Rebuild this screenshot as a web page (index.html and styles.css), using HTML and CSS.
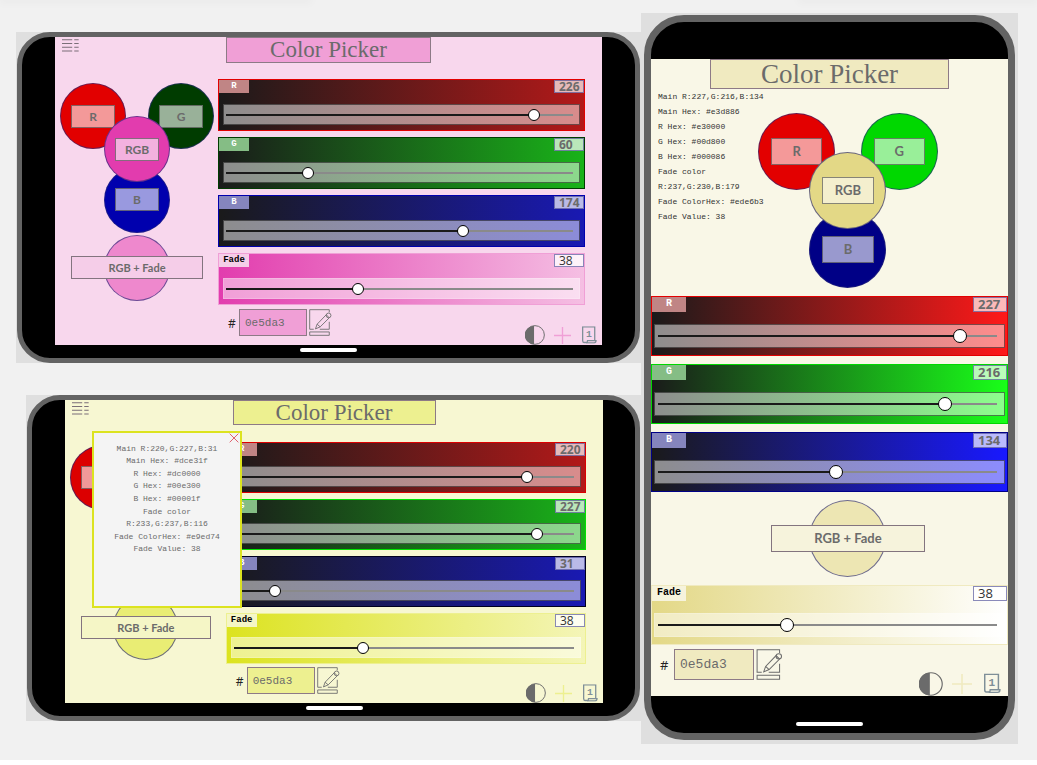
FILE: index.html
```html
<!DOCTYPE html>
<html lang="en">
<head>
    <meta charset="UTF-8">
    <meta name="viewport" content="width=device-width, initial-scale=1.0">
    <title>Color Picker</title>
    <link rel="stylesheet" href="styles.css">
</head>
<body>
    <!-- shared icons -->
    <svg class="sprite" aria-hidden="true">
        <symbol id="icon-menu" viewBox="0 0 50 38">
            <path d="M0 2H30M36 2H49M0 13H30M36 13H49M0 24H30M36 24H49M0 35H30M36 35H49" fill="none" stroke="#7b6f78" stroke-width="3"/>
        </symbol>
        <symbol id="icon-edit" viewBox="0 0 68 80">
            <g fill="none" stroke="#6b6b6b" stroke-width="2.6">
                <path d="M14 60H2V2H60V10M60 38V60H32"/>
                <path d="M2 68H60V78H2Z"/>
                <path d="M19 59L24 45L51 17L60 26L33 53ZM24 45L33 53"/>
                <circle cx="58" cy="19" r="7"/>
            </g>
        </symbol>
        <symbol id="icon-contrast" viewBox="0 0 62 62">
            <circle cx="31" cy="31" r="29" fill="none" stroke="#6b6b6b" stroke-width="3"/>
            <path d="M28 2A29 29 0 0 0 28 60Z" fill="#6b6b6b"/>
        </symbol>
        <symbol id="icon-plus" viewBox="0 0 50 50">
            <path d="M25 0V50M0 25H50" fill="none" stroke="currentColor" stroke-width="4"/>
        </symbol>
        <symbol id="icon-page" viewBox="0 0 46 54">
            <g fill="none" stroke="#7f8f98" stroke-width="4">
                <path d="M15 50H6Q2 50 2 44V2H39V44"/>
                <path d="M17 44H43Q43 51 37 51H13Q17 50 17 44Z"/>
            </g>
        </symbol>
        <symbol id="icon-close" viewBox="0 0 30 30">
            <path d="M2 2L28 28M28 2L2 28" fill="none" stroke="#e0606c" stroke-width="3"/>
        </symbol>
    </svg>

    <div class="page-top"><span></span><span></span></div>

    <main class="gallery">
        <div class="landscape-column">

            <!-- Pink, landscape -->
            <section class="frame">
                <div class="device pink">
                    <div class="screen">
                        <header class="top">
                            <button type="button" class="icon-button menu" aria-label="Menu"><svg><use href="#icon-menu"/></svg></button>
                            <h1>Color Picker</h1>
                        </header>
                        <div class="swatches">
                            <div class="cluster">
                                <div class="circle r"><span>R</span></div>
                                <div class="circle g"><span>G</span></div>
                                <div class="circle rgb"><span>RGB</span></div>
                                <div class="circle b"><span>B</span></div>
                            </div>
                            <div class="circle mix"><span>RGB + Fade</span></div>
                        </div>
                        <div class="bars">
                            <div class="bar r">
                                <div class="bar-head"><label for="r1">R</label><input type="text" value="226" aria-label="R value"></div>
                                <div class="slot"><input type="range" id="r1" max="255" value="226" style="--fill: 88.6%"></div>
                            </div>
                            <div class="bar g">
                                <div class="bar-head"><label for="g1">G</label><input type="text" value="60" aria-label="G value"></div>
                                <div class="slot"><input type="range" id="g1" max="255" value="60" style="--fill: 23.5%"></div>
                            </div>
                            <div class="bar b">
                                <div class="bar-head"><label for="b1">B</label><input type="text" value="174" aria-label="B value"></div>
                                <div class="slot"><input type="range" id="b1" max="255" value="174" style="--fill: 68.2%"></div>
                            </div>
                        </div>
                        <div class="bar fade">
                            <div class="bar-head"><label for="f1">Fade</label><input type="text" value="38" aria-label="Fade value"></div>
                            <div class="slot"><input type="range" id="f1" max="100" value="38" style="--fill: 38%"></div>
                        </div>
                        <footer class="tools">
                            <label for="hex1">#</label>
                            <input type="text" id="hex1" class="hex" value="0e5da3">
                            <button type="button" class="icon-button edit" aria-label="Edit"><svg><use href="#icon-edit"/></svg></button>
                            <div class="actions">
                                <button type="button" class="icon-button contrast" aria-label="Contrast"><svg><use href="#icon-contrast"/></svg></button>
                                <button type="button" class="icon-button plus" aria-label="Add"><svg><use href="#icon-plus"/></svg></button>
                                <button type="button" class="icon-button page"><svg viewBox="0 0 46 54"><use href="#icon-page"/><text x="21" y="34" text-anchor="middle">1</text></svg></button>
                            </div>
                        </footer>
                    </div>
                    <div class="home"></div>
                </div>
            </section>

            <!-- Yellow, landscape, info open -->
            <section class="frame indent">
                <div class="device yellow">
                    <div class="screen">
                        <header class="top">
                            <button type="button" class="icon-button menu" aria-label="Menu"><svg><use href="#icon-menu"/></svg></button>
                            <h1>Color Picker</h1>
                        </header>
                        <div class="swatches">
                            <div class="cluster">
                                <div class="circle r"><span></span></div>
                                <div class="circle g"></div>
                                <div class="circle rgb"></div>
                                <div class="circle b"></div>
                            </div>
                            <div class="circle mix"><span>RGB + Fade</span></div>
                        </div>
                        <div class="bars">
                            <div class="bar r">
                                <div class="bar-head"><label for="r2">R</label><input type="text" value="220" aria-label="R value"></div>
                                <div class="slot"><input type="range" id="r2" max="255" value="220" style="--fill: 86.3%"></div>
                            </div>
                            <div class="bar g">
                                <div class="bar-head"><label for="g2">G</label><input type="text" value="227" aria-label="G value"></div>
                                <div class="slot"><input type="range" id="g2" max="255" value="227" style="--fill: 89%"></div>
                            </div>
                            <div class="bar b">
                                <div class="bar-head"><label for="b2">B</label><input type="text" value="31" aria-label="B value"></div>
                                <div class="slot"><input type="range" id="b2" max="255" value="31" style="--fill: 12.2%"></div>
                            </div>
                        </div>
                        <div class="bar fade">
                            <div class="bar-head"><label for="f2">Fade</label><input type="text" value="38" aria-label="Fade value"></div>
                            <div class="slot"><input type="range" id="f2" max="100" value="38" style="--fill: 38%"></div>
                        </div>
                        <footer class="tools">
                            <label for="hex2">#</label>
                            <input type="text" id="hex2" class="hex" value="0e5da3">
                            <button type="button" class="icon-button edit" aria-label="Edit"><svg><use href="#icon-edit"/></svg></button>
                            <div class="actions">
                                <button type="button" class="icon-button contrast" aria-label="Contrast"><svg><use href="#icon-contrast"/></svg></button>
                                <button type="button" class="icon-button plus" aria-label="Add"><svg><use href="#icon-plus"/></svg></button>
                                <button type="button" class="icon-button page"><svg viewBox="0 0 46 54"><use href="#icon-page"/><text x="21" y="34" text-anchor="middle">1</text></svg></button>
                            </div>
                        </footer>
                        <div class="popup">
                            <button type="button" class="icon-button close" aria-label="Close"><svg><use href="#icon-close"/></svg></button>
                            <ul class="info">
                                <li>Main R:220,G:227,B:31</li>
                                <li>Main Hex: #dce31f</li>
                                <li>R Hex: #dc0000</li>
                                <li>G Hex: #00e300</li>
                                <li>B Hex: #00001f</li>
                                <li>Fade color</li>
                                <li>R:233,G:237,B:116</li>
                                <li>Fade ColorHex: #e9ed74</li>
                                <li>Fade Value: 38</li>
                            </ul>
                        </div>
                    </div>
                    <div class="home"></div>
                </div>
            </section>
        </div>

        <!-- Sand, portrait -->
        <section class="frame">
            <div class="device sand portrait">
                <div class="screen">
                    <header class="top">
                        <h1>Color Picker</h1>
                    </header>
                    <ul class="info">
                        <li>Main R:227,G:216,B:134</li>
                        <li>Main Hex: #e3d886</li>
                        <li>R Hex: #e30000</li>
                        <li>G Hex: #00d800</li>
                        <li>B Hex: #000086</li>
                        <li>Fade color</li>
                        <li>R:237,G:230,B:179</li>
                        <li>Fade ColorHex: #ede6b3</li>
                        <li>Fade Value: 38</li>
                    </ul>
                    <div class="cluster">
                        <div class="circle r"><span>R</span></div>
                        <div class="circle g"><span>G</span></div>
                        <div class="circle rgb"><span>RGB</span></div>
                        <div class="circle b"><span>B</span></div>
                    </div>
                    <div class="bars">
                        <div class="bar r">
                            <div class="bar-head"><label for="r3">R</label><input type="text" value="227" aria-label="R value"></div>
                            <div class="slot"><input type="range" id="r3" max="255" value="227" style="--fill: 89%"></div>
                        </div>
                        <div class="bar g">
                            <div class="bar-head"><label for="g3">G</label><input type="text" value="216" aria-label="G value"></div>
                            <div class="slot"><input type="range" id="g3" max="255" value="216" style="--fill: 84.7%"></div>
                        </div>
                        <div class="bar b">
                            <div class="bar-head"><label for="b3">B</label><input type="text" value="134" aria-label="B value"></div>
                            <div class="slot"><input type="range" id="b3" max="255" value="134" style="--fill: 52.5%"></div>
                        </div>
                    </div>
                    <div class="circle mix"><span>RGB + Fade</span></div>
                    <div class="bar fade">
                        <div class="bar-head"><label for="f3">Fade</label><input type="text" value="38" aria-label="Fade value"></div>
                        <div class="slot"><input type="range" id="f3" max="100" value="38" style="--fill: 38%"></div>
                    </div>
                    <footer class="tools">
                        <label for="hex3">#</label>
                        <input type="text" id="hex3" class="hex" value="0e5da3">
                        <button type="button" class="icon-button edit" aria-label="Edit"><svg><use href="#icon-edit"/></svg></button>
                        <div class="actions">
                            <button type="button" class="icon-button contrast" aria-label="Contrast"><svg><use href="#icon-contrast"/></svg></button>
                            <button type="button" class="icon-button plus" aria-label="Add"><svg><use href="#icon-plus"/></svg></button>
                            <button type="button" class="icon-button page"><svg viewBox="0 0 46 54"><use href="#icon-page"/><text x="21" y="34" text-anchor="middle">1</text></svg></button>
                        </div>
                    </footer>
                </div>
                <div class="home"></div>
            </div>
        </section>
    </main>
</body>
</html>
```
FILE: styles.css
```css
* {
    box-sizing: border-box;
}
html {
    background: #fff;
}
body {
    margin: 0;
    background: #f1f1f1;
    color: #6b6b6b;
    font-family: "Open Sans", "Noto Sans", sans-serif;
}
.sprite {
    position: absolute;
    width: 0;
    height: 0;
}

/* bottom shadows of the cards above */
.page-top {
    display: flex;
    justify-content: space-between;
    height: 0;
}
.page-top span {
    width: 30%;
    height: 0;
    box-shadow: 0 0 8px 1px rgba(0, 0, 0, 0.1);
}
.page-top span:last-child {
    width: 23%;
}

.gallery {
    display: grid;
    grid-template-columns: minmax(0, 625fr) minmax(0, 377fr);
    align-items: start;
    padding: 13px 19px 16px 16px;
}
.landscape-column {
    display: flex;
    flex-direction: column;
    gap: 32px;
    padding-top: 19px;
}
.frame {
    background: #dfdfdf;
    padding: 0 1px;
}
.frame.indent {
    margin-left: 10px;
}

/* device */
.device {
    --d: 66px;
    --thumb: 12px;
    background: #000;
    border: 5px solid #636363;
    border-radius: 33px;
    padding: 0 33px;
}
.screen {
    position: relative;
    display: grid;
    grid-template-columns: auto 1fr;
    background: var(--bg);
}
.home {
    width: 57px;
    height: 4px;
    margin: 3px auto 6px;
    border-radius: 2px;
    background: #fff;
}

.pink {
    --bg: #f8d7ed;
    --accent: #f09fd6;
    --main: #e23cae;
    --mix: #ee88cd;
    --mix-label: #f5cde8;
    --fade-end: #f5bfe3;
    --r: #e20000;
    --g: #003c00;
    --b: #0000ae;
}
.yellow {
    --d: 65px;
    --bg: #f7f7d2;
    --accent: #edf090;
    --main: #dce31f;
    --mix: #e9ed74;
    --mix-label: #f5f6c6;
    --fade-end: #f4f5b8;
    --r: #dc0000;
    --g: #00e300;
    --b: #00001f;
}
.sand {
    --bg: #f9f7e7;
    --accent: #f0eac0;
    --main: #e3d886;
    --mix: #ede6b3;
    --mix-label: #f6f3dc;
    --fade-end: #fff;
    --r: #e30000;
    --g: #00d800;
    --b: #000086;
}

/* header */
.top {
    grid-column: 1 / -1;
    display: grid;
    grid-template-columns: 1fr 205px 1fr;
}
.top h1 {
    grid-column: 2;
    margin: 0;
    height: 26px;
    border: 1px solid #8d7a86;
    background: var(--accent);
    font: 23px/24px "Liberation Serif", serif;
    text-align: center;
}
.icon-button {
    display: block;
    padding: 0;
    border: 0;
    background: none;
    color: var(--accent);
    cursor: pointer;
}
.icon-button svg {
    display: block;
    width: 100%;
    height: 100%;
}
.menu {
    width: 17px;
    height: 13px;
    margin: 2px 0 0 7px;
}

/* circles */
.swatches {
    grid-row: 2 / 5;
    grid-column: 1;
    padding: 20px 4px 0 5px;
}
.cluster {
    display: flex;
    flex-wrap: wrap;
    justify-content: space-between;
    width: calc(var(--d) * 7 / 3);
}
.circle {
    display: flex;
    align-items: center;
    justify-content: center;
    width: var(--d);
    height: var(--d);
    border: 1px solid rgba(40, 40, 120, 0.65);
    border-radius: 50%;
}
.circle span {
    flex: none;
    width: calc(var(--d) * 2 / 3);
    height: 23px;
    border: 1px solid rgba(60, 60, 60, 0.6);
    background: rgba(255, 255, 255, 0.6);
    font: bold 12px/21px Lato, sans-serif;
    text-align: center;
}
.circle.r {
    background: var(--r);
}
.circle.g {
    background: var(--g);
}
.circle.rgb {
    position: relative;
    z-index: 1;
    margin: calc(var(--d) / -2) auto 0;
    background: var(--main);
}
.circle.b {
    margin: calc(var(--d) * -23 / 100) calc(var(--d) * 2 / 3) 0;
    background: var(--b);
}
.circle.mix {
    margin: 2px auto 0;
    background: var(--mix);
}
.circle.mix span {
    width: calc(var(--d) * 2);
    border-color: #83747f;
    background: var(--mix-label);
    font-size: 11px;
}

/* slider bars */
.bars {
    display: grid;
    gap: 6px;
    grid-column: 2;
    margin: 16px 17px 6px 0;
}
.bar {
    border: 1px solid var(--edge);
    height: 52px;
    display: flex;
    flex-direction: column;
    justify-content: space-between;
    background: linear-gradient(to right, var(--from), var(--to)) border-box;
}
.bars .bar {
    --from: #1a1a1a;
}
.bar.r {
    --edge: var(--r);
    --to: #b31919;
}
.bar.g {
    --edge: var(--g);
    --to: #19b319;
}
.bar.b {
    --edge: var(--b);
    --to: #1919b3;
}
.bar.fade {
    --edge: var(--accent);
    --from: var(--main);
    --to: var(--fade-end);
    grid-column: 2;
    margin-right: 17px;
}
.bar-head {
    display: flex;
    justify-content: space-between;
}
.bar-head label,
.bar-head input {
    width: 30px;
    height: 13px;
}
.bar-head label {
    color: #fff;
    font: bold 9px/12px "Liberation Mono", monospace;
    text-align: center;
}
.r .bar-head label {
    background: #c08585;
}
.g .bar-head label {
    background: #85bd85;
}
.b .bar-head label {
    background: #8585bd;
}
.fade .bar-head label {
    background: var(--mix-label);
    color: #000;
}
.bar-head input {
    padding: 0 0 0 4px;
    border: 1px solid rgba(60, 60, 140, 0.6);
    background: rgba(255, 255, 255, 0.7);
    color: #6b6b6b;
    font: bold 12px/11px "Open Sans", sans-serif;
}
.fade .bar-head input {
    background: rgba(255, 255, 255, 0.8);
    color: #333;
    font-weight: normal;
}
.slot {
    display: flex;
    align-items: center;
    height: 21px;
    margin: 0 4px 5px;
    border: 1px solid rgba(0, 0, 0, 0.5);
    background: rgba(255, 255, 255, 0.5);
}
.fade .slot {
    border-color: rgba(255, 255, 255, 0.2);
}
.slot input {
    -webkit-appearance: none;
    appearance: none;
    flex: 1;
    min-width: 0;
    height: var(--thumb);
    margin: 0 0 0 -4px;
    background: linear-gradient(to right, #1a1a1a var(--fill), #8a8a8a var(--fill)) center / calc(100% - var(--thumb)) 2px no-repeat;
}
.slot input::-webkit-slider-thumb {
    -webkit-appearance: none;
    width: var(--thumb);
    height: var(--thumb);
    border: 1px solid #000;
    border-radius: 50%;
    background: #fff;
}

/* bottom row */
.tools {
    grid-column: 2;
    display: flex;
    height: 40px;
    padding: 4px 5px 0 10px;
}
.tools label {
    width: 11px;
    color: #222;
    font-size: 12px;
    line-height: 30px;
}
.hex {
    width: 68px;
    height: 27px;
    padding: 0 5px;
    border: 1px solid #8d7a86;
    background: var(--accent);
    color: #6b6b6b;
    font: 11px "Liberation Mono", monospace;
}
.edit {
    width: 23px;
    height: 27px;
    margin-left: 2px;
}
.actions {
    display: flex;
    align-items: center;
    align-self: flex-end;
    gap: 9px;
    margin-left: auto;
}
.contrast {
    width: 20px;
    height: 20px;
}
.plus {
    width: 17px;
    height: 17px;
}
.page {
    width: 15px;
    height: 18px;
    margin-left: 2px;
}
.page text {
    font: bold 30px "Liberation Mono", monospace;
    fill: #7f8f98;
}

/* info */
.info {
    display: grid;
    margin: 0;
    padding: 0;
    list-style: none;
    font: 8px "Liberation Mono", monospace;
}
.info li {
    align-self: center;
}
.popup {
    position: absolute;
    left: 27px;
    top: 31px;
    z-index: 2;
    width: 150px;
    height: 177px;
    padding-top: 9px;
    border: 2px solid var(--main);
    background: #f4f4f4;
    text-align: center;
}
.popup .info {
    height: 113px;
}
.close {
    position: absolute;
    top: 0;
    right: 1px;
    width: 10px;
    height: 10px;
}

.yellow {
    padding-right: 32px;
}
.yellow .top {
    grid-template-columns: 1fr 203px 1fr;
}
.yellow .top h1 {
    height: 25px;
    line-height: 23px;
}
.yellow .bars {
    margin-top: 17px;
}
.yellow .bar {
    height: 51px;
}
.yellow .tools {
    height: 39px;
    padding-top: 3px;
}

/* portrait layout */
.portrait {
    --d: 77px;
    --thumb: 14px;
    border-width: 7px;
    border-radius: 40px;
    padding: 37px 0 0;
}
.frame:has(.portrait) {
    padding: 2px 3px 4px;
}
.portrait .top {
    grid-template-columns: 1fr 67% 1fr;
}
.portrait .top h1 {
    height: 30px;
    font-size: 27px;
    line-height: 28px;
}
.portrait .info {
    grid-area: 2 / 1 / 3 / 3;
    align-self: start;
    padding-left: 7px;
    color: #333;
    line-height: 15px;
}
.portrait .cluster {
    grid-area: 2 / 1 / 3 / 3;
    margin: 24px 0 8px 30%;
}
.portrait .circle span {
    height: 27px;
    font-size: 13px;
    line-height: 25px;
}
.portrait .bars,
.portrait .bar.fade {
    grid-column: 1 / -1;
    margin: 0;
}
.portrait .bars {
    gap: 8px;
}
.portrait .bar {
    height: 60px;
}
.portrait .bar.r {
    --to: #ff1919;
}
.portrait .bar.g {
    --to: #19ff19;
}
.portrait .bar.b {
    --to: #1919ff;
}
.portrait .bar-head label,
.portrait .bar-head input {
    width: 34px;
    height: 15px;
}
.portrait .bar-head label {
    font-size: 10px;
    line-height: 14px;
}
.portrait .bar-head input {
    font-size: 13px;
    line-height: 13px;
}
.portrait .slot {
    height: 24px;
    margin: 0 2px 7px;
}
.portrait .circle.mix {
    grid-column: 1 / -1;
    margin: 8px 0 8px calc(30% + var(--d) * 2 / 3);
}
.portrait .tools {
    grid-column: 1 / -1;
    height: 51px;
    padding: 4px 7px 0 9px;
}
.portrait .tools label {
    width: 14px;
    font-size: 13px;
    line-height: 32px;
}
.portrait .hex {
    width: 80px;
    height: 31px;
    font-size: 13px;
}
.portrait .edit {
    width: 27px;
    height: 31px;
}
.portrait .contrast {
    width: 24px;
    height: 24px;
}
.portrait .plus {
    width: 20px;
    height: 20px;
}
.portrait .page {
    width: 17px;
    height: 21px;
    margin-left: 3px;
}
.portrait .home {
    width: 67px;
    margin: 26px auto 7px;
}
```
